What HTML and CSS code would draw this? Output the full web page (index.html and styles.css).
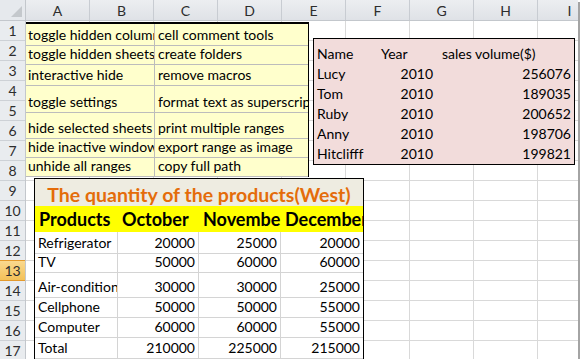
FILE: index.html
```html
<!DOCTYPE html>
<html>
<head>
<meta charset="utf-8">
<link rel="stylesheet" href="styles.css">
</head>
<body>
<div class="sheet">
  <div class="corner"><span class="tri"></span></div>
  <div class="colheads">
    <div class="ch">A</div><div class="ch">B</div><div class="ch">C</div><div class="ch">D</div><div class="ch">E</div><div class="ch">F</div><div class="ch">G</div><div class="ch">H</div><div class="ch">I</div>
  </div>
  <div class="rowheads">
    <div class="rh">1</div><div class="rh">2</div><div class="rh">3</div><div class="rh">4</div><div class="rh">5</div><div class="rh">6</div><div class="rh">7</div><div class="rh">8</div><div class="rh">9</div><div class="rh">10</div><div class="rh">11</div><div class="rh">12</div><div class="rh active">13</div><div class="rh">14</div><div class="rh">15</div><div class="rh">16</div><div class="rh">17</div>
  </div>
  <div class="cells">
    <div class="pic yellow">
      <div class="y l">toggle hidden columns</div><div class="y">cell comment tools</div>
      <div class="y l">toggle hidden sheets</div><div class="y">create folders</div>
      <div class="y l">interactive hide</div><div class="y">remove macros</div>
      <div class="y l">toggle settings</div><div class="y">format text as superscript</div>
      <div class="y l">hide selected sheets</div><div class="y">print multiple ranges</div>
      <div class="y l">hide inactive windows</div><div class="y">export range as image</div>
      <div class="y l">unhide all ranges</div><div class="y">copy full path</div>
    </div>
    <div class="pic pink">
      <div class="p head">Name</div><div class="p head">Year</div><div class="p head s">sales volume($)</div>
      <div class="p">Lucy</div><div class="p num">2010</div><div class="p num">256076</div>
      <div class="p">Tom</div><div class="p num">2010</div><div class="p num">189035</div>
      <div class="p">Ruby</div><div class="p num">2010</div><div class="p num">200652</div>
      <div class="p">Anny</div><div class="p num">2010</div><div class="p num">198706</div>
      <div class="p">Hitclifff</div><div class="p num">2010</div><div class="p num">199821</div>
    </div>
    <div class="pic products">
      <div class="title">The quantity of the products(West)</div>
      <div class="hd">Products</div><div class="hd">October</div><div class="hd">November</div><div class="hd">December</div>
      <div class="d">Refrigerator</div><div class="d n">20000</div><div class="d n">25000</div><div class="d n last">20000</div>
      <div class="d">TV</div><div class="d n">50000</div><div class="d n">60000</div><div class="d n last">60000</div>
      <div class="d">Air-conditioner</div><div class="d n">30000</div><div class="d n">30000</div><div class="d n last">25000</div>
      <div class="d">Cellphone</div><div class="d n">50000</div><div class="d n">50000</div><div class="d n last">55000</div>
      <div class="d">Computer</div><div class="d n">60000</div><div class="d n">60000</div><div class="d n last">55000</div>
      <div class="d">Total</div><div class="d n">210000</div><div class="d n">225000</div><div class="d n last">215000</div>
    </div>
  </div>
</div>
</body>
</html>
```

FILE: styles.css
```css
html, body {
  margin: 0;
  padding: 0;
  background: #ffffff;
}

.sheet {
  width: 578px;
  height: 359px;
  display: grid;
  grid-template-columns: 26px 1fr;
  grid-template-rows: 21px 1fr;
  overflow: hidden;
  box-shadow: 2px 2px 0 #a4a4a4;
  font-family: Lato, "Liberation Sans", sans-serif;
  font-size: 14px;
  color: #000;
}

.corner {
  background: #e6e9ed;
  border-right: 1px solid #c3c7cc;
  border-bottom: 1px solid #c3c7cc;
  display: flex;
  align-items: flex-end;
  justify-content: flex-end;
  padding: 0 3px 3px 0;
}

.tri {
  width: 0;
  height: 0;
  border-left: 11px solid transparent;
  border-bottom: 11px solid #c4c8cc;
}

.colheads {
  display: flex;
  background: linear-gradient(#eceef1, #dfe2e7);
  border-bottom: 1px solid #c3c7cc;
  overflow: hidden;
}

.ch {
  flex: 0 0 64px;
  box-sizing: border-box;
  border-right: 1px solid #c8ccd2;
  display: flex;
  align-items: center;
  justify-content: center;
  color: #2d2d2d;
}

.rowheads {
  display: flex;
  flex-direction: column;
  background: #e9ecef;
  border-right: 1px solid #c3c7cc;
}

.rh {
  flex: 0 0 20px;
  box-sizing: border-box;
  border-bottom: 1px solid #cdd1d6;
  display: flex;
  align-items: center;
  justify-content: center;
  color: #2d2d2d;
}

.rh.active {
  background: linear-gradient(#fad98f, #f3c158);
  border-bottom-color: #e49a2c;
  border-top: 1px solid #e49a2c;
  margin-top: -1px;
  flex-basis: 21px;
}

.cells {
  position: relative;
  background-color: #ffffff;
  background-image:
    linear-gradient(to right, transparent 63px, #d9d9d9 63px),
    linear-gradient(to bottom, transparent 19px, #d9d9d9 19px);
  background-size: 64px 100%, 100% 20px;
}

.pic {
  position: absolute;
  box-sizing: border-box;
}

.yellow {
  left: 0;
  top: 1px;
  width: 283px;
  border-top: 2px solid #000;
  border-right: 1px solid #000;
  background: #ffffcc;
  display: grid;
  grid-template-columns: 129px 1fr;
  grid-template-rows: 22px 19px 21px 27px 26px 19px 19px;
}

.y {
  box-sizing: border-box;
  border-bottom: 1px solid #bcbcbc;
  padding: 0 2px 1px 3px;
  white-space: nowrap;
  overflow: hidden;
  display: flex;
  align-items: flex-end;
  line-height: 18px;
}

.y.l {
  border-right: 1px solid #bcbcbc;
  padding-left: 2px;
}

.pink {
  left: 287px;
  top: 17px;
  width: 262px;
  height: 127px;
  border: 1px solid #000;
  background: #f2dcdb;
  display: grid;
  grid-template-columns: 64px 58px 1fr;
  grid-template-rows: 25px repeat(5, 20px);
}

.p {
  padding: 0 3px 1px 3px;
  display: flex;
  align-items: flex-end;
  line-height: 18px;
  white-space: nowrap;
}

.p.s {
  padding-left: 6px;
}

.p.num {
  justify-content: flex-end;
}

.products {
  left: 8px;
  top: 157px;
  width: 330px;
  height: 190px;
  border: 1px solid #000;
  background: #fff;
  display: grid;
  grid-template-columns: 83px 81px 82px 82px;
  grid-template-rows: 27px 26px 22px 19px 25px 20px 20px 21px;
}

.title {
  grid-column: 1 / 5;
  background: #eeece1;
  color: #e46c0a;
  font-weight: 700;
  font-size: 19.5px;
  line-height: 22px;
  display: flex;
  align-items: flex-end;
  justify-content: center;
  padding-bottom: 0;
  white-space: nowrap;
}

.hd {
  background: #ffff00;
  font-weight: 700;
  font-size: 18px;
  padding: 0 2px 2px 4px;
  display: flex;
  align-items: flex-end;
  white-space: nowrap;
  overflow: hidden;
}

.d {
  box-sizing: border-box;
  border-bottom: 1px solid #d4d4d4;
  border-right: 1px solid #d4d4d4;
  padding: 0 3px 1px 3px;
  display: flex;
  align-items: flex-end;
  line-height: 18px;
  white-space: nowrap;
  overflow: hidden;
}

.d.n {
  justify-content: flex-end;
}

.d.last {
  border-right: none;
}
```
